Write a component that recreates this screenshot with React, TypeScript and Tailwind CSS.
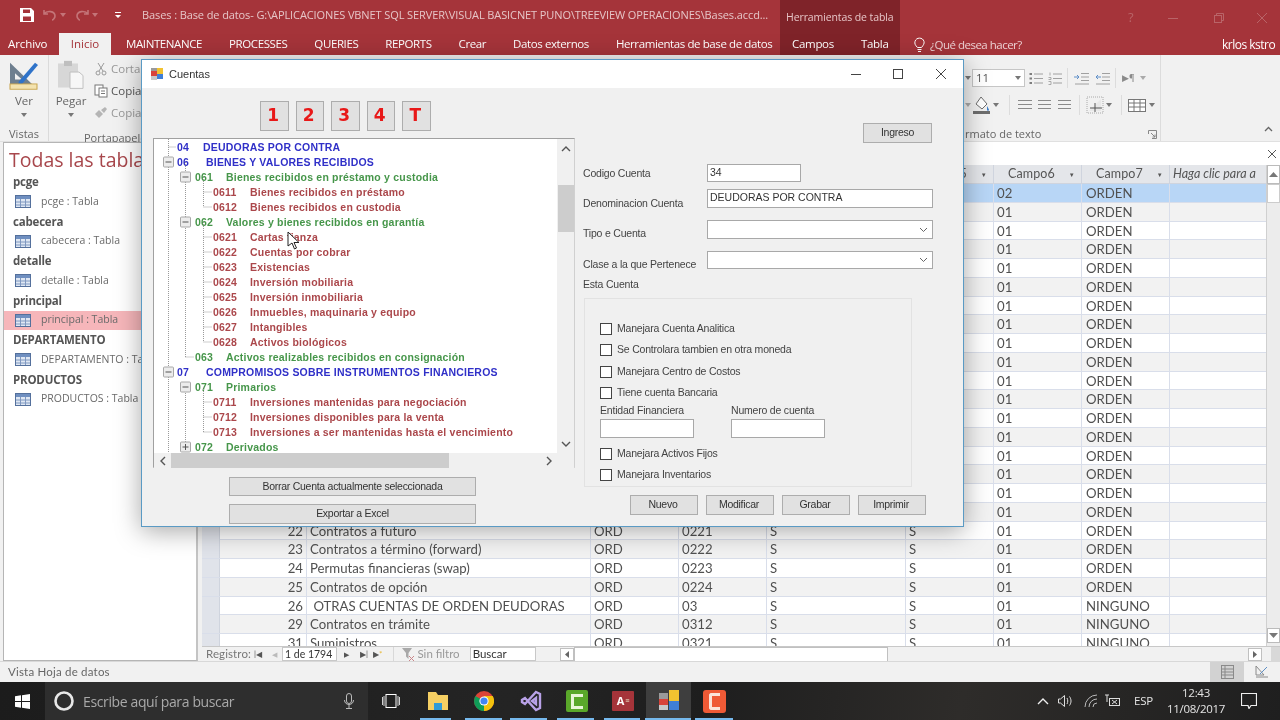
import React from "react";

const sans = "[font-family:'Liberation_Sans',Arial,sans-serif]";

type TreeRow = { level: 1 | 2 | 3; code: string; label: string; w?: number };
const tree: TreeRow[] = [
  { level: 1, code: "04", label: "DEUDORAS POR CONTRA" },
  { level: 1, code: "06", label: "BIENES Y VALORES RECIBIDOS", w: 29 },
  { level: 2, code: "061", label: "Bienes recibidos en préstamo y custodia" },
  { level: 3, code: "0611", label: "Bienes recibidos en préstamo" },
  { level: 3, code: "0612", label: "Bienes recibidos en custodia" },
  { level: 2, code: "062", label: "Valores y bienes recibidos en garantía" },
  { level: 3, code: "0621", label: "Cartas fianza" },
  { level: 3, code: "0622", label: "Cuentas por cobrar" },
  { level: 3, code: "0623", label: "Existencias" },
  { level: 3, code: "0624", label: "Inversión mobiliaria" },
  { level: 3, code: "0625", label: "Inversión inmobiliaria" },
  { level: 3, code: "0626", label: "Inmuebles, maquinaria y equipo" },
  { level: 3, code: "0627", label: "Intangibles" },
  { level: 3, code: "0628", label: "Activos biológicos" },
  { level: 2, code: "063", label: "Activos realizables recibidos en consignación" },
  { level: 1, code: "07", label: "COMPROMISOS SOBRE INSTRUMENTOS FINANCIEROS", w: 29 },
  { level: 2, code: "071", label: "Primarios" },
  { level: 3, code: "0711", label: "Inversiones mantenidas para negociación" },
  { level: 3, code: "0712", label: "Inversiones disponibles para la venta" },
  { level: 3, code: "0713", label: "Inversiones a ser mantenidas hasta el vencimiento" },
  { level: 2, code: "072", label: "Derivados" },
];

function TreeRowView({ r }: { r: TreeRow }) {
  const cfg =
    r.level === 1
      ? { pad: "pl-[23px]", col: "w-[26px]", color: "text-[#3030c8]" }
      : r.level === 2
      ? { pad: "pl-[41px]", col: "w-[31px]", color: "text-[#46964a]" }
      : { pad: "pl-[59px]", col: "w-[37px]", color: "text-[#ab474b]" };
  return (
    <div className={`flex items-center h-[15px] whitespace-nowrap ${cfg.pad} ${cfg.color}`}>
      {r.w ? <span className="w-[29px] shrink-0">{r.code}</span> : <span className={`${cfg.col} shrink-0`}>{r.code}</span>}
      <span>{r.label}</span>
    </div>
  );
}

function TreeLines() {
  const y = (i: number) => 8 + 15 * i;
  const dot = { stroke: "#9a9a9a", strokeDasharray: "1 1", strokeWidth: 1, fill: "none" };
  const box = (cx: number, i: number, plus = false) => (
    <g key={`${cx}-${i}`}>
      <rect x={cx - 5} y={y(i) - 5} width={10} height={10} rx={1} fill="#ececec" stroke="#a8a8a8" />
      <line x1={cx - 3} x2={cx + 3} y1={y(i)} y2={y(i)} stroke="#555" />
      {plus && <line x1={cx} x2={cx} y1={y(i) - 3} y2={y(i) + 3} stroke="#555" />}
    </g>
  );
  const leaves = [3, 4, 6, 7, 8, 9, 10, 11, 12, 13, 17, 18, 19];
  return (
    <svg className="absolute left-0 top-0" width="404" height="314">
      <line x1="14.5" x2="14.5" y1="0" y2="314" {...dot} />
      <line x1="31.5" x2="31.5" y1={y(1)} y2={y(14)} {...dot} />
      <line x1="31.5" x2="31.5" y1={y(16)} y2="314" {...dot} />
      <line x1="49.5" x2="49.5" y1={y(2)} y2={y(4)} {...dot} />
      <line x1="49.5" x2="49.5" y1={y(5)} y2={y(13)} {...dot} />
      <line x1="49.5" x2="49.5" y1={y(16)} y2={y(19)} {...dot} />
      <line x1="14.5" x2="22" y1={y(0)} y2={y(0)} {...dot} />
      <line x1="31.5" x2="40" y1={y(14)} y2={y(14)} {...dot} />
      {leaves.map((i) => (
        <line key={i} x1="49.5" x2="58" y1={y(i)} y2={y(i)} {...dot} />
      ))}
      {box(14.5, 1)}
      {box(14.5, 15)}
      {box(31.5, 2)}
      {box(31.5, 5)}
      {box(31.5, 16)}
      {box(31.5, 20, true)}
    </svg>
  );
}

const Chevron = ({ d }: { d: string }) => (
  <svg width="10" height="10" viewBox="0 0 10 10" fill="none" stroke="#555" strokeWidth="1.4">
    <path d={d} />
  </svg>
);

function Btn({ children, className = "" }: { children: React.ReactNode; className?: string }) {
  return (
    <div className={`flex items-center justify-center bg-[#e1e1e1] border border-[#adadad] text-[10.5px] text-[#333] tracking-[-0.27px] ${className}`}>
      {children}
    </div>
  );
}

function Check({ label }: { label: string }) {
  return (
    <div className="flex items-center h-[13px]">
      <div className="w-[12px] h-[12px] bg-white border border-[#444] shrink-0" />
      <span className="ml-[5px] text-[10.5px] text-[#444] tracking-[-0.2px]">{label}</span>
    </div>
  );
}

function Select() {
  return (
    <div className="w-[226px] h-full bg-white border border-[#a8a8a8] flex items-center justify-end pr-[4px]">
      <svg width="9" height="6" viewBox="0 0 9 6" fill="none" stroke="#666">
        <path d="M1 1l3.5 3.5L8 1" />
      </svg>
    </div>
  );
}

function Dialog() {
  return (
    <div className={`absolute left-[141px] top-[59px] w-[823px] h-[468px] border border-[#5a9ac4] bg-[#f0f0f0] shadow-[0_4px_24px_rgba(0,0,0,0.35)] flex flex-col ${sans}`}>
      <div className="h-[28px] bg-white flex items-center shrink-0">
        <svg className="ml-[8px]" width="14" height="14" viewBox="0 0 14 14">
          <rect x="7" y="1" width="6" height="6" fill="#f2c230" />
          <rect x="1" y="4" width="6" height="5" fill="#d8433a" />
          <rect x="7" y="7" width="6" height="5" fill="#3f7fd6" />
          <rect x="1" y="9" width="6" height="4" fill="#c8c8c8" />
          <rect x="1" y="1" width="6" height="3" fill="#9a9a9a" />
        </svg>
        <span className="ml-[5px] text-[11px] text-[#333]">Cuentas</span>
        <div className="ml-auto flex items-center">
          <svg width="10" height="10" viewBox="0 0 10 10" stroke="#444"><path d="M0 5.5h10" /></svg>
          <svg className="ml-[32px]" width="10" height="10" viewBox="0 0 10 10" fill="none" stroke="#444"><rect x="0.5" y="0.5" width="9" height="9" /></svg>
          <svg className="ml-[33px] mr-[17px]" width="10" height="10" viewBox="0 0 10 10" stroke="#444"><path d="M0 0l10 10M10 0L0 10" /></svg>
        </div>
      </div>
      <div className="flex pl-[11px]">
        <div className="w-[422px] pt-[13px] shrink-0">
          <div className="flex ml-[107px] gap-[7px] h-[30px]">
            {["1", "2", "3", "4", "T"].map((t) => (
              <div key={t} className="w-[28.5px] h-[30px] bg-[#e1e1e1] border border-[#adadad] flex items-center justify-center pr-[2px] text-[#e81818] font-bold text-[17px] [font-family:'DejaVu_Sans',sans-serif]">
                {t}
              </div>
            ))}
          </div>
          <div className="mt-[7px] w-[422px] h-[330px] bg-white border border-[#a0a0a0] border-b-[#d8d8d8] border-r-[#d0d0d0] flex flex-col">
            <div className="flex h-[314px]">
              <div className="relative w-[403px] h-[314px] overflow-hidden text-[10.5px] font-bold tracking-[0.2px] pt-[1px]">
                <TreeLines />
                {tree.map((r) => (
                  <TreeRowView key={r.code} r={r} />
                ))}
              </div>
              <div className="w-[17px] bg-[#f0f0f0] flex flex-col items-center pt-[5px]">
                <Chevron d="M1 7l4-4 4 4" />
                <div className="w-[16px] h-[47px] bg-[#cdcdcd] mt-[31px]" />
                <div className="mt-auto mb-[4px]"><Chevron d="M1 3l4 4 4-4" /></div>
              </div>
            </div>
            <div className="h-[15px] bg-[#f0f0f0] flex items-center">
              <div className="w-[17px] flex justify-center"><Chevron d="M7 1L3 5l4 4" /></div>
              <div className="w-[278px] h-[15px] bg-[#cdcdcd]" />
              <div className="ml-[95px]"><Chevron d="M3 1l4 4-4 4" /></div>
            </div>
          </div>
          <Btn className="mt-[9px] ml-[76px] w-[247px] h-[19px]">Borrar Cuenta actualmente seleccionada</Btn>
          <Btn className="mt-[8px] ml-[76px] w-[247px] h-[20px]">Exportar a Excel</Btn>
        </div>
        <div className="ml-[8px] w-[350px] flex flex-col text-[10.5px] text-[#444] tracking-[-0.2px]">
          <Btn className="mt-[35px] self-end w-[69px] h-[20px] mr-[1px]">Ingreso</Btn>
          <div className="mt-[21px] flex h-[18px]">
            <span className="w-[124px] pt-[2px]">Codigo Cuenta</span>
            <div className="w-[94px] h-[18px] bg-white border border-[#a8a8a8] text-[10.5px] pl-[2px] text-[#333]">34</div>
          </div>
          <div className="mt-[7px] flex h-[19px]">
            <span className="w-[124px] pt-[7px]">Denominacion Cuenta</span>
            <div className="w-[226px] h-[19px] bg-white border border-[#a8a8a8] pl-[2px] text-[#333] tracking-normal">DEUDORAS POR CONTRA</div>
          </div>
          <div className="mt-[12px] flex h-[19px]">
            <span className="w-[124px] pt-[6px]">Tipo e Cuenta</span>
            <Select />
          </div>
          <div className="mt-[12px] flex h-[18px]">
            <span className="w-[124px] pt-[6px] whitespace-nowrap">Clase a la que Pertenece</span>
            <Select />
          </div>
          <div className="mt-[8px] h-[13px]">Esta Cuenta</div>
          <div className="mt-[8px] ml-[1px] w-[328px] h-[189px] border border-[#e2e2e2] pl-[15px] pt-[23px] flex flex-col">
            <div className="flex flex-col gap-[8.5px]">
              <Check label="Manejara Cuenta Analitica" />
              <Check label="Se Controlara tambien en otra moneda" />
              <Check label="Manejara Centro de Costos" />
              <Check label="Tiene cuenta Bancaria" />
            </div>
            <div className="mt-[4px] grid grid-cols-[131px_131px]">
              <div className="h-[12px] leading-[12px]">Entidad Financiera</div>
              <div className="h-[12px] leading-[12px]">Numero de cuenta</div>
              <div className="mt-[3px] w-[94px] h-[19px] bg-white border border-[#a8a8a8]" />
              <div className="mt-[3px] w-[94px] h-[19px] bg-white border border-[#a8a8a8]" />
            </div>
            <div className="mt-[10px] flex flex-col gap-[7.5px]">
              <Check label="Manejara Activos Fijos" />
              <Check label="Manejara Inventarios" />
            </div>
          </div>
          <div className="mt-[8px] ml-[47px] flex gap-[8px]">
            {["Nuevo", "Modificar", "Grabar", "Imprimir"].map((b) => (
              <Btn key={b} className="w-[68px] h-[20px] pr-[2px]">{b}</Btn>
            ))}
          </div>
        </div>
      </div>
    </div>
  );
}

const TableIcon = () => (
  <svg width="16" height="13" viewBox="0 0 16 13" className="shrink-0">
    <rect x="0.5" y="0.5" width="15" height="12" fill="#dfe7f3" stroke="#54709c" />
    <rect x="1" y="1" width="14" height="3" fill="#6f8fc0" />
    <path d="M1 7h14M1 10h14M5.5 4v8M10.5 4v8" stroke="#7f98c0" />
  </svg>
);

const nav = ["pcge", "cabecera", "detalle", "principal", "DEPARTAMENTO", "PRODUCTOS"];

function NavPane() {
  return (
    <div className="w-[195px] h-full ml-[3px] mr-[4px] bg-white border-l border-b border-t border-[#b5b5b5] border-r-[2px] border-r-[#c4c4c4] shrink-0 overflow-hidden pt-[5px]">
      <div className="pl-[5px] h-[24px] text-[19.5px] leading-[24px] text-[#a8474c] whitespace-nowrap [font-family:'Open_Sans',sans-serif]">Todas las tablas</div>
      {nav.map((n) => (
        <div key={n}>
          <div className="pl-[9px] h-[20px] leading-[20px] font-bold text-[11.5px] text-[#555] [font-family:'Open_Sans',sans-serif] tracking-[-0.2px]">{n}</div>
          <div className={`flex items-center h-[19.5px] pl-[11px] whitespace-nowrap text-[10.5px] text-[#6a6a6a] [font-family:'Open_Sans',sans-serif] ${n === "principal" ? "bg-[#f6b6ba]" : ""}`}>
            <TableIcon />
            <span className="ml-[10px]">{n} : Tabla</span>
          </div>
        </div>
      ))}
    </div>
  );
}

type Row = { n?: string; name?: string; code?: string; c6: string; c7: string };
const hidden: Row[] = Array.from({ length: 18 }, (_, i) => ({ c6: i === 0 ? "02" : "01", c7: "ORDEN" }));
const rows: Row[] = [
  ...hidden,
  { n: "22", name: "Contratos a futuro", code: "0221", c6: "01", c7: "ORDEN" },
  { n: "23", name: "Contratos a término (forward)", code: "0222", c6: "01", c7: "ORDEN" },
  { n: "24", name: "Permutas financieras (swap)", code: "0223", c6: "01", c7: "ORDEN" },
  { n: "25", name: "Contratos de opción", code: "0224", c6: "01", c7: "ORDEN" },
  { n: "26", name: "\u00A0OTRAS CUENTAS DE ORDEN DEUDORAS", code: "03", c6: "01", c7: "NINGUNO" },
  { n: "29", name: "Contratos en trámite", code: "0312", c6: "01", c7: "NINGUNO" },
  { n: "31", name: "Suministros", code: "0321", c6: "01", c7: "NINGUNO" },
];

const cols = "grid grid-cols-[18px_87px_284px_88px_88px_139px_88px_88px_88px_96px]";

function Datasheet() {
  return (
    <div className="flex-1 h-full flex flex-col min-w-0 [font-family:Lato,sans-serif]">
      <div className="h-[23px] bg-white flex items-center justify-end pr-[3px] shrink-0">
        <svg width="10" height="10" viewBox="0 0 10 10" stroke="#555"><path d="M1 1l8 8M9 1L1 9" /></svg>
      </div>
      <div className="relative h-[481px] overflow-hidden flex shrink-0">
        <div className="w-[1064px] shrink-0">
          <div className={`${cols} h-[19px] bg-[#e4e6ea] text-[12.5px] text-[#555] border-b border-[#cfd4de]`}>
            {["", "", "", "", "", "", "Campo5", "Campo6", "Campo7"].map((h, i) => (
              <div key={i} className="border-r border-[#cfd4de] flex items-center pl-[14px] gap-[14px]">
                {h && <span className="tracking-[0.1px]">{h}</span>}
                {h && <span className="text-[6px]">▼</span>}
              </div>
            ))}
            <div className="flex items-center pl-[3px] italic whitespace-nowrap overflow-hidden text-[12.5px]">Haga clic para a</div>
          </div>
          {rows.map((r, i) => (
            <div
              key={i}
              className={`${cols} h-[18.75px] text-[13.2px] leading-[18px] text-[#505050] border-b border-[#d9deea] ${i === 0 ? "bg-[#b8d6f6]" : i % 2 ? "bg-[#f2f2f2]" : "bg-white"}`}
            >
              <div className="bg-[#e0e3ea] border-r border-[#cfd4de]" />
              <div className="text-right pr-[3px] border-r border-[#d9deea]">{r.n}</div>
              <div className="pl-[3px] border-r border-[#d9deea] whitespace-nowrap">{r.name}</div>
              <div className="pl-[3px] border-r border-[#d9deea]">{r.n ? "ORD" : ""}</div>
              <div className="pl-[3px] border-r border-[#d9deea]">{r.code}</div>
              <div className="pl-[3px] border-r border-[#d9deea]">{r.n ? "S" : ""}</div>
              <div className="pl-[3px] border-r border-[#d9deea]">{r.n ? "S" : ""}</div>
              <div className="pl-[3px] border-r border-[#d9deea]">{r.c6}</div>
              <div className="pl-[4px] border-r border-[#d9deea]">{r.c7}</div>
              <div />
            </div>
          ))}
        </div>
        <div className="w-[14px] flex flex-col bg-[#ececec] border-l border-[#d0d0d0]">
          <div className="h-[19px] bg-white border border-[#bbb] flex items-center justify-center">
            <svg width="9" height="5" viewBox="0 0 9 5" fill="#777"><path d="M4.5 0L9 5H0z" /></svg>
          </div>
          <div className="h-[19px] bg-white border border-[#ccc]" />
          <div className="mt-auto h-[15px] mb-[3px] bg-white border border-[#bbb] flex items-center justify-center">
            <svg width="9" height="5" viewBox="0 0 9 5" fill="#777"><path d="M0 0h9L4.5 5z" /></svg>
          </div>
        </div>
      </div>
      <div className="h-[15px] bg-[#f1f1f1] border-t border-[#c8c8c8] flex items-center text-[11.5px] text-[#777] whitespace-nowrap shrink-0">
        <span className="ml-[4px] tracking-[0.1px]">Registro:</span>
        <span className="ml-[3px] text-[8px] text-[#555]">|◀</span>
        <span className="ml-[10px] text-[7px] text-[#bbb]">◀</span>
        <div className="ml-[5px] w-[55px] h-[14px] bg-white border border-[#c8c8c8] text-[#333] text-[10.5px] leading-[12px] pl-[2px]">1 de 1794</div>
        <span className="ml-[7px] text-[7px] text-[#555]">▶</span>
        <span className="ml-[11px] text-[8px] text-[#555]">▶|</span>
        <span className="ml-[5px] text-[8px] text-[#555]">▶<span className="text-[#e8b93a]">*</span></span>
        <div className="ml-[11px] h-[15px] border-l border-[#d8d8d8] pl-[7px] flex items-center">
          <svg width="14" height="14" viewBox="0 0 14 14">
            <path d="M1 1h10L7.5 6v6L5 9.5V6z" fill="#a8a8a8" />
            <path d="M8 9l5 5M13 9l-5 5" stroke="#c9868a" />
          </svg>
          <span className="ml-[2px] text-[#999]">Sin filtro</span>
        </div>
        <div className="ml-[10px] w-[66px] h-[14px] bg-white border border-[#c8c8c8] pl-[2px] leading-[12px] text-[#333]">Buscar</div>
        <div className="ml-[24px] w-[14px] h-[13px] bg-white border border-[#c0c0c0] flex items-center justify-center">
          <svg width="4" height="7" viewBox="0 0 4 7" fill="#666"><path d="M4 0v7L0 3.5z" /></svg>
        </div>
        <div className="w-[314px] h-[15px] bg-white border border-[#c0c0c0]" />
        <div className="ml-[360px] w-[14px] h-[13px] bg-white border border-[#c0c0c0] flex items-center justify-center">
          <svg width="4" height="7" viewBox="0 0 4 7" fill="#666"><path d="M0 0v7l4-3.5z" /></svg>
        </div>
        <div className="ml-auto w-[9px] h-[15px] bg-[#d8d8d8]" />
      </div>
    </div>
  );
}

function VerIcon() {
  return (
    <svg width="30" height="30" viewBox="0 0 30 34" preserveAspectRatio="none">
      <path d="M1 2v24h22z" fill="#6e7f8f" />
      <path d="M6 14v7h7z" fill="#f1f1f1" />
      <path d="M10 23L26 2l3 2.5L13 26l-4 1z" fill="#2f73c9" />
      <rect x="1" y="26" width="27" height="6" fill="#f3e3b0" stroke="#c7a24a" />
    </svg>
  );
}

function PegarIcon() {
  return (
    <svg width="28" height="31" viewBox="0 0 28 36" preserveAspectRatio="none">
      <rect x="1" y="4" width="20" height="28" fill="#d7d7d7" />
      <rect x="7" y="1" width="8" height="6" fill="#bfbfbf" />
      <path d="M13 14h9l4 4v15H13z" fill="#f7f7f7" stroke="#bdbdbd" />
    </svg>
  );
}

const Caret = ({ c = "#777" }: { c?: string }) => (
  <svg width="6" height="4" viewBox="0 0 6 4" fill={c} className="shrink-0"><path d="M0 0h6L3 4z" /></svg>
);
const Lines = ({ w = 14 }: { w?: number }) => (
  <svg width={w} height="12" viewBox={`0 0 ${w} 12`} stroke="#8a8a8a" className="shrink-0">
    <path d={`M0 1.5h${w}M0 5.5h${w}M0 9.5h${w}`} />
  </svg>
);
const ListIcon = ({ num = false }: { num?: boolean }) => (
  <svg width="14" height="13" viewBox="0 0 14 13" stroke="#a0a0a0" className="shrink-0">
    <path d="M5 2h9M5 6.5h9M5 11h9" />
    {num ? (
      <path d="M2 0.5v3M0.5 5.5h2.5v2h-2.5M0.5 9.5h2.5v3h-2.5" stroke="#9a9a9a" fill="none" strokeWidth="0.8" />
    ) : (
      <path d="M0.5 2h2.5M0.5 6.5h2.5M0.5 11h2.5" stroke="#7d7d7d" strokeWidth="2" />
    )}
  </svg>
);
const IndentIcon = ({ flip = false }: { flip?: boolean }) => (
  <svg width="15" height="13" viewBox="0 0 15 13" stroke="#a0a0a0" className="shrink-0" fill="none">
    <path d="M7 1.5h8M7 5h8M7 8.5h8M1 12h14" />
    <path d={flip ? "M6 5H1M3 3L1 5l2 2" : "M0 5h5M3 3l2 2-2 2"} stroke="#5f8fc8" />
  </svg>
);
const Sep = ({ h = "h-[20px]" }: { h?: string }) => <div className={`w-px ${h} bg-[#dcdcdc] shrink-0`} />;

function Ribbon() {
  return (
    <div className="h-[87px] bg-[#f1f1f1] flex shrink-0 text-[#666] [font-family:'Open_Sans',sans-serif] border-b border-[#e0e0e0]">
      <div className="w-[49px] h-full flex flex-col items-center pt-[6px] border-r border-[#dadada] shrink-0">
        <VerIcon />
        <span className="text-[11.5px] mt-[2px] leading-[16px]">Ver</span>
        <div className="mt-[4px]"><Caret /></div>
        <span className="text-[11px] mt-[10px] leading-[14px]">Vistas</span>
      </div>
      <div className="w-[100px] h-full flex flex-col shrink-0 pl-[7px] pt-[5px]">
        <div className="flex">
          <div className="flex flex-col items-center w-[30px]">
            <PegarIcon />
            <span className="text-[11.5px] mt-[2px] leading-[16px]">Pegar</span>
            <div className="mt-[4px]"><Caret /></div>
          </div>
          <div className="flex flex-col ml-[8px] text-[11.5px] text-[#999] gap-[5px]">
            <span className="h-[17px] whitespace-nowrap flex items-center gap-[3px]">
              <svg width="14" height="14" viewBox="0 0 14 14" fill="none" stroke="#9a9a9a"><circle cx="4" cy="11" r="2" /><circle cx="10" cy="11" r="2" /><path d="M5 9l5-8M9 9L4 1" /></svg>
              Cortar
            </span>
            <span className="h-[17px] whitespace-nowrap flex items-center gap-[3px] text-[#555]">
              <svg width="14" height="14" viewBox="0 0 14 14" fill="#fff" stroke="#777"><rect x="1" y="1" width="8" height="10" /><rect x="5" y="4" width="8" height="9" /><path d="M7 7h4M7 9.5h4" /></svg>
              Copia
            </span>
            <span className="h-[17px] whitespace-nowrap flex items-center gap-[3px]">
              <svg width="14" height="14" viewBox="0 0 14 14" fill="#b5b5b5"><path d="M1 8l4-4 4 4-4 4zM7 4l4-3 2 2-3 4z" /></svg>
              Copia
            </span>
          </div>
        </div>
        <span className="text-[11px] leading-[14px] mt-[10px] ml-[28px] whitespace-nowrap">Portapapeles</span>
      </div>
      <div className="flex-1" />
      <div className="w-[318px] h-full flex shrink-0">
        <div className="w-[197px] h-full pl-[3px] pt-[14px] flex flex-col">
          <div className="flex items-center h-[18px]">
            <Caret />
            <div className="ml-[1px] w-[53px] h-[18px] bg-white border border-[#c6c6c6] flex items-center pl-[3px] text-[11.5px] text-[#555]">
              11
              <span className="ml-auto mr-[3px]"><Caret /></span>
            </div>
            <div className="ml-[4px]"><ListIcon /></div>
            <div className="ml-[5px] mr-[5px]"><ListIcon num /></div>
            <Sep />
            <div className="ml-[6px]"><IndentIcon /></div>
            <div className="ml-[6px] mr-[5px]"><IndentIcon flip /></div>
            <Sep />
            <span className="ml-[6px] text-[9px] text-[#8a8a8a]">▶¶</span>
            <span className="ml-[5px]"><Caret c="#aaa" /></span>
          </div>
          <div className="flex items-center h-[20px] mt-[8px]">
            <Caret c="#aaa" />
            <svg className="ml-[1px]" width="19" height="19" viewBox="0 0 19 19">
              <path d="M9 1l6 7-5 5-6-5z" fill="#fff" stroke="#6e6e6e" />
              <path d="M15 10c1 2 2 3 2 4s-2 1-2 0 0-2 0-4z" fill="#3f7fc9" />
              <rect x="1" y="15" width="17" height="3" fill="#6e6e6e" />
            </svg>
            <span className="ml-[2px]"><Caret /></span>
            <div className="ml-[10px]"><Sep /></div>
            <div className="ml-[8px]"><Lines w={14} /></div>
            <div className="ml-[6px]"><Lines w={13} /></div>
            <div className="ml-[7px] mr-[8px]"><Lines w={13} /></div>
            <Sep />
            <svg className="ml-[6px]" width="18" height="18" viewBox="0 0 18 18" fill="none">
              <rect x="1" y="1" width="16" height="16" stroke="#aaa" strokeDasharray="1 1" />
              <path d="M3 15L15 3v12z" fill="#e8e8e8" />
              <path d="M9 7v9M4 12h12" stroke="#555" />
            </svg>
            <span className="ml-[2px]"><Caret /></span>
            <div className="ml-[9px] mr-[6px]"><Sep /></div>
            <svg width="18" height="13" viewBox="0 0 18 13" fill="#fff" stroke="#777">
              <rect x="0.5" y="0.5" width="17" height="12" />
              <path d="M0 4h18M0 8h18M6 0v13M12 0v13" />
            </svg>
            <span className="ml-[3px]"><Caret /></span>
          </div>
          <div className="mt-[12px] flex items-center pr-[2px]">
            <span className="text-[11px] leading-[14px] whitespace-nowrap">rmato de texto</span>
            <svg className="ml-auto" width="9" height="9" viewBox="0 0 9 9" fill="none" stroke="#888"><path d="M0.5 4V0.5H8.5V8.5H4" /><path d="M3 3l4 4M7 4.5V7H4.5" /></svg>
          </div>
        </div>
        <div className="w-[1px]" />
        <div className="flex-1 flex h-full">
          <div className="h-full w-px bg-[#dcdcdc]" />
          <div className="flex-1 flex items-end justify-end pb-[9px] pr-[7px]">
            <svg width="9" height="6" viewBox="0 0 9 6" fill="none" stroke="#666" strokeWidth="1.3"><path d="M1 5l3.5-3.5L8 5" /></svg>
          </div>
        </div>
      </div>
    </div>
  );
}

const tabs = ["MAINTENANCE", "PROCESSES", "QUERIES", "REPORTS", "Crear", "Datos externos", "Herramientas de base de datos"];

function Header() {
  return (
    <div className="h-[55px] bg-[#a5343a] shrink-0 flex flex-col text-white [font-family:'Open_Sans',sans-serif]">
      <div className="h-[30px] flex items-center relative">
        <svg className="ml-[20px]" width="14" height="14" viewBox="0 0 14 14" fill="#fff">
          <path fillRule="evenodd" d="M0 0h11l3 3v11H0zM3 1.5v3.5h7V1.5zM3 8.5V13h8V8.5z" />
        </svg>
        <svg className="ml-[9px]" width="14" height="12" viewBox="0 0 14 12" fill="none" stroke="#c47478" strokeWidth="1.6">
          <path d="M1 1v4h4M1 5c3-4 11-3 11 2 0 2-2 4-3 4" />
        </svg>
        <span className="ml-[3px]"><Caret c="#c47478" /></span>
        <svg className="ml-[9px]" width="14" height="12" viewBox="0 0 14 12" fill="none" stroke="#c47478" strokeWidth="1.6">
          <path d="M13 1v4H9M13 5c-3-4-11-3-11 2 0 2 2 4 3 4" />
        </svg>
        <span className="ml-[3px]"><Caret c="#c47478" /></span>
        <svg className="ml-[17px]" width="6" height="6" viewBox="0 0 6 6" fill="#fff"><path d="M0 0h6v1H0zM0 3h6L3 6z" /></svg>
        <span className="ml-[21px] text-[11px] text-[#e6c5c7] whitespace-nowrap tracking-[-0.1px]">
          Bases : Base de datos- G:\APLICACIONES VBNET SQL SERVER\VISUAL BASICNET PUNO\TREEVIEW OPERACIONES\Bases.accd...
        </span>
      </div>
      <div className="h-[25px] flex items-end text-[11.5px] whitespace-nowrap">
        <span className="ml-[8px] w-[51px] h-[22px] leading-[22px] tracking-[-0.1px]">Archivo</span>
        <div className="w-[52px] h-[22px] bg-[#f1f1f1] text-[#a5343a] text-center leading-[22px]">Inicio</div>
        <div className="flex gap-[27px] ml-[15px] h-[22px] leading-[22px] tracking-[-0.4px]">
          {tabs.map((t) => (
            <span key={t}>{t}</span>
          ))}
        </div>
      </div>
    </div>
  );
}

function ContextTab() {
  return (
    <div className="absolute left-[780px] top-0 w-[120px] h-[55px] bg-[#7f2329] text-white [font-family:'Open_Sans',sans-serif] whitespace-nowrap">
      <div className="h-[33px] pl-[6px] leading-[34px] text-[10.5px] text-[#e6c5c7] tracking-[-0.1px]">Herramientas de tabla</div>
      <div className="flex gap-[27px] pl-[12px] text-[11.5px] leading-[22px] tracking-[-0.3px]">
        <span>Campos</span>
        <span>Tabla</span>
      </div>
    </div>
  );
}

function HeaderRight() {
  return (
    <>
      <div className="absolute left-[914px] top-[36px] flex items-center [font-family:'Open_Sans',sans-serif] text-[11.5px] whitespace-nowrap">
        <svg width="11" height="15" viewBox="0 0 11 15" fill="none" stroke="#fff"><path d="M3.5 10.5C1 8 0.5 6.5 1 4.5 2 0 9 0 10 4.5c.5 2-.5 3.5-2.5 6zM3.5 12.5h4M4 14.5h3" /></svg>
        <span className="ml-[5px] tracking-[-0.5px] text-[#ecd0d2]">¿Qué desea hacer?</span>
      </div>
      <div className="absolute left-[1222px] top-[36px] text-white [font-family:'Open_Sans',sans-serif] text-[12px] tracking-[-0.5px] whitespace-nowrap">krlos kstro</div>
      <div className="absolute left-[1128px] top-[8px] flex items-center text-[#b96468] [font-family:'Open_Sans',sans-serif] text-[13px]">
        <span>?</span>
        <svg className="ml-[34px]" width="10" height="10" viewBox="0 0 10 10" stroke="#b96468"><path d="M0 5.5h10" /></svg>
        <svg className="ml-[36px]" width="10" height="10" viewBox="0 0 10 10" fill="none" stroke="#b96468"><rect x="0.5" y="2.5" width="7" height="7" /><path d="M2.5 2V.5h7v7H8" /></svg>
        <svg className="ml-[33px]" width="10" height="10" viewBox="0 0 10 10" stroke="#b96468"><path d="M0 0l10 10M10 0L0 10" /></svg>
      </div>
    </>
  );
}

function StatusBar() {
  return (
    <div className="h-[21px] bg-[#f1f1f1] flex items-center justify-between shrink-0 [font-family:Lato,sans-serif] text-[11.5px] text-[#666] border-t border-[#d8d8d8]">
      <span className="ml-[8px] tracking-[0.2px]">Vista Hoja de datos</span>
      <div className="flex items-center h-full">
        <div className="w-[34px] h-full bg-[#d2d2d2] flex items-center justify-center">
          <svg width="13" height="14" viewBox="0 0 13 14" fill="none" stroke="#8a8a8a"><rect x="0.5" y="0.5" width="12" height="13" /><path d="M4 0v14M0 4h13M0 7h13M0 10h13" /></svg>
        </div>
        <div className="w-[36px] flex items-center justify-center">
          <svg width="14" height="14" viewBox="0 0 14 14" fill="none" stroke="#8a8a8a"><path d="M1 1v9h8z" /><path d="M5 9l7-7" stroke="#5e8fc4" /><path d="M1 12h12" /></svg>
        </div>
      </div>
    </div>
  );
}

function Taskbar() {
  const under = [
    ["w-[31px]", "ml-[420px]"],
    ["w-[37px]", "ml-[14px]"],
    ["w-[37px]", "ml-[8px]"],
    ["w-[37px]", "ml-[10px]"],
    ["w-[36px]", "ml-[10px]"],
    ["w-[46px]", "ml-[5px]"],
    ["w-[38px]", "ml-[4px]"],
  ];
  return (
    <div className="relative h-[38px] shrink-0 bg-[linear-gradient(100deg,#1c1c1c_0%,#242424_40%,#1e1e1e_55%,#2e2c2a_75%,#1f1f1f_100%)] flex items-center text-white [font-family:'Open_Sans',sans-serif]">
      <div className="w-[45px] h-full flex items-center justify-center">
        <svg width="15" height="15" viewBox="0 0 15 15" fill="#fff"><path d="M0 2.2l6-.9V7H0zM7 1.2L15 0v7H7zM0 8h6v5.7l-6-.9zM7 8h8v7l-8-1.2z" /></svg>
      </div>
      <div className="w-[323px] h-full bg-[#2e2e2e] flex items-center">
        <svg className="ml-[8px]" width="22" height="22" viewBox="0 0 22 22" fill="none" stroke="#e8e8e8" strokeWidth="2.6"><circle cx="11" cy="11" r="8.5" /></svg>
        <span className="ml-[8px] text-[14px] text-[#a9a9a9] tracking-[-0.37px]">Escribe aquí para buscar</span>
        <svg className="ml-auto mr-[14px]" width="10" height="16" viewBox="0 0 10 16" fill="none" stroke="#bbb"><rect x="2.5" y="0.5" width="5" height="10" rx="2.5" /><path d="M0.5 7c0 6 9 6 9 0M5 12v3M2 15.5h6" /></svg>
      </div>
      <svg className="ml-[14px]" width="18" height="14" viewBox="0 0 18 14" fill="none" stroke="#fff"><rect x="4" y="0.5" width="10" height="13" /><path d="M0.5 3v8M2 2v10M17.5 3v8M16 2v10" strokeWidth="0.8" /></svg>
      <svg className="ml-[28px]" width="20" height="20" viewBox="0 0 20 20">
        <path d="M0 1h8l2 3h10v15H0z" fill="#f5cf63" />
        <rect x="6" y="12" width="8" height="7" fill="#2f9bd9" />
      </svg>
      <svg className="ml-[26px]" width="20" height="20" viewBox="0 0 20 20">
        <circle cx="10" cy="10" r="10" fill="#db4437" />
        <path d="M10 10L1.4 5A10 10 0 0 0 10 20l5-8.6z" fill="#0f9d58" />
        <path d="M10 20a10 10 0 0 0 8.7-15H10z" fill="#f4c20d" />
        <circle cx="10" cy="10" r="4.6" fill="#fff" />
        <circle cx="10" cy="10" r="3.6" fill="#4285f4" />
      </svg>
      <svg className="ml-[26px]" width="22" height="22" viewBox="0 0 22 22" fill="none" stroke="#b9a2e8" strokeWidth="2.4">
        <path d="M16 2l4 2v14l-4 2L5 8 2 10v2l3 2L16 2zM16 8l-4 3 4 3z" />
      </svg>
      <div className="ml-[24px] w-[22px] h-[22px] rounded-[2px] bg-[#5aa82a] flex items-center justify-center">
        <div className="w-[12px] h-[15px] border-[3px] border-r-0 border-[#e9f5d8]" />
      </div>
      <div className="ml-[24px] w-[22px] h-[20px] bg-[#a5343a] rounded-[1px] flex items-center justify-center text-[11px] font-bold text-white">A<span className="text-[7px] ml-[1px] text-[#eec]">≡</span></div>
      <div className="ml-[12px] w-[45px] h-full bg-[#3e3e3e] flex items-center justify-center">
        <svg width="20" height="22" viewBox="0 0 20 22">
          <rect x="0" y="3" width="9" height="6" fill="#9a9a9a" />
          <rect x="10" y="0" width="10" height="11" fill="#f2c230" />
          <rect x="0" y="9" width="9" height="6" fill="#d8433a" />
          <rect x="10" y="11" width="10" height="9" fill="#3f7fd6" />
          <rect x="0" y="15" width="9" height="5" fill="#c8c8c8" />
        </svg>
      </div>
      <div className="ml-[12px] w-[23px] h-[23px] rounded-[3px] bg-[#ef5a36] flex items-center justify-center">
        <div className="w-[11px] h-[17px] rounded-l-[3px] border-[3px] border-r-0 border-[#fbe3d9]" />
      </div>
      <div className="ml-auto flex items-center text-[#e4e4e4]">
        <svg width="12" height="7" viewBox="0 0 12 7" fill="none" stroke="#eee" strokeWidth="1.4"><path d="M1 6l5-5 5 5" /></svg>
        <svg className="ml-[9px]" width="16" height="14" viewBox="0 0 16 14" fill="none" stroke="#ddd"><path d="M0.5 5v4h2l4 3.5v-11L2.5 5zM9 4c1 2 1 4 0 6M11.5 2.5c2 3 2 6 0 9" /></svg>
        <svg className="ml-[10px]" width="14" height="14" viewBox="0 0 14 14" fill="none" stroke="#bbb"><path d="M1 13a12 12 0 0 1 12-12M5 13a8 8 0 0 1 8-8M9 13a4 4 0 0 1 4-4" /></svg>
        <svg className="ml-[7px]" width="15" height="14" viewBox="0 0 15 14" fill="none" stroke="#ddd"><rect x="4.5" y="4.5" width="10" height="7" /><path d="M7 6l5 4M12 6l-5 4M2 1v7M0 1h4" /></svg>
        <span className="ml-[14px] text-[11.5px] tracking-[-0.2px]">ESP</span>
        <div className="ml-[15px] w-[56px] flex flex-col items-center text-[11.5px] leading-[16px] tracking-[-0.3px]">
          <span>12:43</span>
          <span>11/08/2017</span>
        </div>
        <svg className="ml-[17px] mr-[23px]" width="16" height="16" viewBox="0 0 16 16" fill="none" stroke="#eee" strokeWidth="1.2"><path d="M0.5 0.5h15v12H10l-2 3-1-3H0.5z" /></svg>
      </div>
      <div className="absolute left-0 bottom-0 flex h-[2px]">
        {under.map(([w, m], i) => (
          <div key={i} className={`${w} ${m} bg-[#76b9ed]`} />
        ))}
      </div>
    </div>
  );
}

function Cursor() {
  return (
    <svg className="absolute left-[287px] top-[231px]" width="13" height="19" viewBox="0 0 13 19">
      <path d="M1 1v14l4-3 2.5 6 2-1-2.5-5.5H12z" fill="#fff" stroke="#222" />
    </svg>
  );
}

export default function App() {
  return (
    <div className="relative w-[1280px] h-[720px] overflow-hidden flex flex-col bg-[#f1f1f1] blur-[0.35px]">
      <Header />
      <ContextTab />
      <HeaderRight />
      <Ribbon />
      <div className="flex h-[519px] shrink-0 bg-[#f1f1f1]">
        <NavPane />
        <Datasheet />
      </div>
      <StatusBar />
      <Taskbar />
      <Dialog />
      <Cursor />
    </div>
  );
}
